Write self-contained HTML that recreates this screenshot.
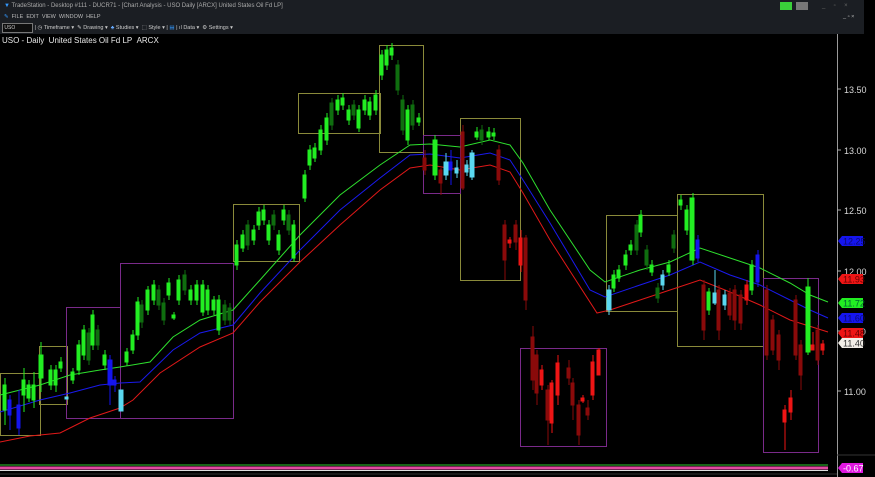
<!DOCTYPE html>
<html><head><meta charset="utf-8"><style>
html,body{margin:0;padding:0;background:#000;width:875px;height:477px;overflow:hidden;font-family:"Liberation Sans",sans-serif}
.t{position:absolute;left:0;width:864px;top:0;height:12px;background:#1b1e23;color:#aaa;font-size:6px;line-height:12px}
.m{position:absolute;left:0;width:864px;top:12px;height:10px;background:#1b1e23;color:#bbb;font-size:5.5px;line-height:10px}
.tb{position:absolute;left:0;width:864px;top:22px;height:12px;background:#1b1e23;color:#ccc;font-size:5.5px;line-height:12px}
</style></head><body>
<div class="t"><span style="color:#39f;margin-left:4px">▼</span> TradeStation - Desktop #111 - DUCR71 - [Chart Analysis - USO Daily [ARCX] United States Oil Fd LP]
<span style="position:absolute;left:780px;top:2px;width:12px;height:8px;background:#3ad03a"></span>
<span style="position:absolute;left:796px;top:2px;width:12px;height:8px;background:#777"></span>
<span style="position:absolute;left:822px;color:#666">_ &nbsp; &nbsp; ▫ &nbsp; &nbsp; ×</span></div>
<div class="m"><span style="color:#39f;margin-left:4px">✎</span>&nbsp; FILE &nbsp;EDIT &nbsp;VIEW &nbsp;WINDOW &nbsp;HELP<span style="position:absolute;left:843px">_ ▫ ×</span></div>
<div class="tb"><span style="display:inline-block;margin-left:2px;width:29px;height:8px;border:1px solid #777;background:#0d0d0d;line-height:8px;vertical-align:middle;font-size:5px">&nbsp;USO</span> | ◷ Timeframe ▾ &nbsp;✎ Drawing ▾ &nbsp;<span style="color:#6af">♣</span> Studies ▾ &nbsp;⬚ Style ▾ | <span style="color:#39f">▤</span> | ıl Data ▾ &nbsp;⚙ Settings ▾</div>
<div style="position:absolute;left:2px;top:36px;color:#e8e8e8;font-size:8px">USO - Daily &nbsp;United States Oil Fd LP &nbsp;ARCX</div>
<svg width="875" height="477" style="position:absolute;left:0;top:0" xmlns="http://www.w3.org/2000/svg">
<g fill="none" stroke-width="1">
<g stroke="#8a8a3a"><rect x="0.5" y="373.5" width="40" height="62"/><rect x="39.5" y="346.5" width="28" height="58"/><rect x="233.5" y="204.5" width="66" height="57"/><rect x="298.5" y="93.5" width="82" height="40"/><rect x="379.5" y="45.5" width="44" height="107"/><rect x="460.5" y="118.5" width="60" height="162"/><rect x="606.5" y="215.5" width="71" height="96"/><rect x="677.5" y="194.5" width="86" height="152"/></g>
<g stroke="#7a2a8a"><rect x="66.5" y="307.5" width="54" height="111"/><rect x="120.5" y="263.5" width="113" height="155"/><rect x="423.5" y="135.5" width="37" height="58"/><rect x="520.5" y="348.5" width="86" height="98"/><rect x="763.5" y="278.5" width="55" height="174"/></g>
<polyline stroke="#2ee02e" points="0,395 40,385 70,375 100,370 120,367 150,362 173,337 200,320 233,310 260,280 300,235 340,195 380,165 410,145 430,144 460,147 490,140 510,145 523,163 550,210 590,270 605,282 640,270 670,262 700,248 730,258 760,268 790,283 810,295 828,302"/>
<polyline stroke="#1a1aee" points="0,412 40,400 70,393 100,385 120,383 140,382 173,350 200,333 233,325 260,293 300,250 340,210 380,178 410,155 430,154 460,158 490,153 510,160 523,180 550,223 590,290 605,297 640,285 670,275 700,262 730,275 760,285 790,300 810,310 828,318"/>
<polyline stroke="#e01818" points="0,442 30,436 60,433 90,418 120,408 133,400 160,373 200,347 233,333 260,302 300,262 340,225 380,190 410,168 430,165 460,170 490,165 510,172 523,193 550,240 597,313 610,310 640,300 670,290 700,280 730,292 760,305 790,320 828,332"/>
</g>
<g id="c">
<g fill="#22ee22" stroke="#22ee22">
<path d="M5 378V425M24 368V412M29 380V402M34 372V408M41 342V392M51 365V390M56 365V392M61 357V372M73 368V384M79 340V375M84 325V360M93 310V350M105 350V370M127 348V366M133 330V354M138 297V340M148 286V315M154 280V305M169 278V300M174 312V320M179 275V305M191 285V305M197 280V305M203 280V316M208 285V315M214 296V315M219 295V335M237 240V270M243 230V252M254 225V245M259 207V230M264 205V225M269 220V245M279 230V255M284 205V225M294 220V262M305 170V202M310 145V170M315 143V162M321 125V155M327 113V145M338 95V115M343 93V110M349 105V125M359 105V132M365 95V115M370 97V120M376 90V115M382 50V80M387 45V70M392 43V60M408 105V145M419 113V126M435 135V180M477 127V140M489 127V140M494 128V140M614 270V292M619 265V282M626 250V270M631 240V255M641 210V237M652 260V276M669 260V276M681 195V210M687 205V235M693 193V265M709 288V315M752 260V295M808 278V355"/>
<rect x="3" y="385" width="3" height="25"/><rect x="22" y="380" width="3" height="15"/><rect x="27" y="385" width="3" height="13"/><rect x="32" y="385" width="3" height="15"/><rect x="39" y="355" width="4" height="23"/><rect x="49" y="370" width="3" height="15"/><rect x="54" y="370" width="3" height="15"/><rect x="59" y="362" width="3" height="6"/><rect x="71" y="372" width="3" height="8"/><rect x="77" y="345" width="3" height="25"/><rect x="82" y="330" width="3" height="25"/><rect x="91" y="315" width="3" height="30"/><rect x="103" y="355" width="3" height="10"/><rect x="125" y="352" width="3" height="10"/><rect x="131" y="335" width="3" height="15"/><rect x="136" y="302" width="3" height="33"/><rect x="146" y="290" width="3" height="20"/><rect x="152" y="285" width="3" height="15"/><rect x="167" y="283" width="3" height="12"/><rect x="172" y="315" width="3" height="3"/><rect x="177" y="280" width="3" height="20"/><rect x="189" y="290" width="3" height="10"/><rect x="195" y="285" width="3" height="15"/><rect x="201" y="285" width="3" height="27"/><rect x="206" y="290" width="3" height="20"/><rect x="212" y="300" width="3" height="10"/><rect x="217" y="300" width="3" height="30"/><rect x="235" y="245" width="3" height="20"/><rect x="241" y="235" width="3" height="13"/><rect x="252" y="230" width="3" height="10"/><rect x="257" y="212" width="3" height="13"/><rect x="262" y="210" width="3" height="10"/><rect x="267" y="225" width="3" height="15"/><rect x="277" y="235" width="3" height="15"/><rect x="282" y="210" width="3" height="10"/><rect x="292" y="225" width="3" height="33"/><rect x="303" y="175" width="3" height="23"/><rect x="308" y="150" width="3" height="15"/><rect x="313" y="148" width="3" height="10"/><rect x="319" y="130" width="3" height="20"/><rect x="325" y="118" width="3" height="22"/><rect x="336" y="100" width="3" height="10"/><rect x="341" y="98" width="3" height="7"/><rect x="347" y="110" width="3" height="10"/><rect x="357" y="110" width="3" height="18"/><rect x="363" y="100" width="3" height="10"/><rect x="368" y="102" width="3" height="13"/><rect x="374" y="95" width="3" height="15"/><rect x="380" y="55" width="3" height="20"/><rect x="385" y="50" width="3" height="15"/><rect x="390" y="48" width="3" height="7"/><rect x="406" y="110" width="3" height="30"/><rect x="417" y="118" width="3" height="4"/><rect x="433" y="140" width="4" height="35"/><rect x="475" y="132" width="3" height="5"/><rect x="487" y="132" width="3" height="5"/><rect x="492" y="133" width="3" height="3"/><rect x="612" y="275" width="3" height="13"/><rect x="617" y="270" width="3" height="8"/><rect x="624" y="255" width="3" height="10"/><rect x="629" y="245" width="3" height="5"/><rect x="639" y="215" width="3" height="17"/><rect x="650" y="265" width="3" height="7"/><rect x="667" y="265" width="3" height="7"/><rect x="679" y="200" width="3" height="5"/><rect x="685" y="210" width="3" height="20"/><rect x="690" y="198" width="4" height="62"/><rect x="707" y="292" width="3" height="18"/><rect x="750" y="265" width="3" height="25"/><rect x="806" y="287" width="4" height="65"/>
</g>
<g fill="#0f6e0f" stroke="#0f6e0f">
<path d="M89 328V365M98 325V350M142 300V328M159 285V310M164 298V325M185 270V295M225 300V325M230 303V325M248 220V250M274 210V230M289 210V235M332 98V130M354 100V120M398 60V95M403 95V135M413 100V130M482 125V145M637 220V255M647 245V270M658 283V303M674 230V253"/>
<rect x="87" y="333" width="3" height="27"/><rect x="96" y="330" width="3" height="15"/><rect x="140" y="305" width="3" height="17"/><rect x="157" y="290" width="3" height="15"/><rect x="162" y="303" width="3" height="17"/><rect x="183" y="275" width="3" height="15"/><rect x="223" y="305" width="3" height="15"/><rect x="228" y="308" width="3" height="12"/><rect x="246" y="225" width="3" height="20"/><rect x="272" y="215" width="3" height="10"/><rect x="287" y="215" width="3" height="15"/><rect x="330" y="103" width="3" height="22"/><rect x="352" y="105" width="3" height="10"/><rect x="396" y="65" width="3" height="25"/><rect x="401" y="100" width="3" height="30"/><rect x="411" y="105" width="3" height="20"/><rect x="480" y="130" width="3" height="10"/><rect x="635" y="225" width="3" height="25"/><rect x="645" y="250" width="3" height="15"/><rect x="656" y="288" width="3" height="10"/><rect x="672" y="235" width="3" height="13"/>
</g>
<g fill="#1515ee" stroke="#1515ee">
<path d="M10 395V430M19 390V435M110 355V405M115 376V392M451 150V185M698 235V262M758 250V287"/>
<rect x="8" y="400" width="3" height="15"/><rect x="17" y="405" width="3" height="23"/><rect x="108" y="360" width="4" height="25"/><rect x="113" y="380" width="3" height="5"/><rect x="449" y="162" width="3" height="8"/><rect x="696" y="240" width="3" height="18"/><rect x="756" y="255" width="3" height="27"/>
</g>
<g fill="#5ad8f0" stroke="#5ad8f0">
<path d="M446 153V180M457 160V178M467 160V176M472 150V180M609 285V315M663 270V290M715 270V305M725 290V310"/>
<rect x="65" y="397" width="3" height="2"/><rect x="119" y="390" width="4" height="21"/><rect x="444" y="162" width="4" height="13"/><rect x="455" y="168" width="3" height="5"/><rect x="465" y="165" width="3" height="7"/><rect x="470" y="153" width="4" height="24"/><rect x="607" y="290" width="4" height="20"/><rect x="661" y="275" width="3" height="10"/><rect x="713" y="293" width="3" height="10"/><rect x="723" y="295" width="3" height="10"/>
</g>
<g fill="#8a0a0a" stroke="#8a0a0a">
<path d="M425 150V175M441 168V195M463 125V190M499 145V185M505 220V280M516 220V250M526 235V310M533 326V390M537 350V405M548 385V445M569 360V385M573 378V420M579 400V445M588 400V420M704 280V340M719 285V340M730 288V320M735 285V330M741 290V330M767 285V360M773 315V355M779 330V370M796 295V360M801 340V390M818 325V365"/>
<rect x="423" y="158" width="3" height="12"/><rect x="439" y="170" width="3" height="13"/><rect x="461" y="132" width="3" height="56"/><rect x="497" y="150" width="3" height="30"/><rect x="503" y="225" width="3" height="35"/><rect x="514" y="225" width="3" height="17"/><rect x="524" y="238" width="3" height="62"/><rect x="531" y="337" width="3" height="43"/><rect x="535" y="355" width="3" height="38"/><rect x="546" y="390" width="3" height="30"/><rect x="567" y="368" width="3" height="10"/><rect x="571" y="383" width="3" height="22"/><rect x="577" y="405" width="3" height="30"/><rect x="586" y="408" width="3" height="7"/><rect x="702" y="285" width="3" height="45"/><rect x="717" y="290" width="3" height="40"/><rect x="728" y="293" width="3" height="22"/><rect x="733" y="290" width="3" height="30"/><rect x="739" y="295" width="3" height="28"/><rect x="765" y="290" width="3" height="65"/><rect x="771" y="320" width="3" height="30"/><rect x="777" y="335" width="3" height="25"/><rect x="794" y="300" width="3" height="55"/><rect x="799" y="345" width="3" height="30"/><rect x="816" y="330" width="3" height="30"/>
</g>
<g fill="#ee1515" stroke="#ee1515">
<path d="M510 237V248M521 230V272M542 365V390M552 380V433M558 355V405M583 395V403M593 355V400M599 348V375M747 280V305M785 405V450M791 390V420M813 332V350M823 340V355"/>
<rect x="508" y="240" width="3" height="3"/><rect x="519" y="238" width="3" height="27"/><rect x="540" y="370" width="3" height="15"/><rect x="550" y="383" width="3" height="40"/><rect x="556" y="363" width="3" height="32"/><rect x="581" y="398" width="3" height="3"/><rect x="591" y="362" width="3" height="33"/><rect x="597" y="350" width="3" height="25"/><rect x="745" y="285" width="3" height="15"/><rect x="783" y="410" width="3" height="12"/><rect x="789" y="398" width="3" height="14"/><rect x="811" y="345" width="3" height="5"/><rect x="821" y="344" width="3" height="6"/>
</g>
</g>
<rect x="0" y="455" width="837" height="22" fill="#000"/>
<line x1="0" y1="465" x2="828" y2="465" stroke="#2ec82e"/>
<rect x="0" y="466.5" width="828" height="3" fill="#e04aa0"/>
<line x1="0" y1="470.5" x2="828" y2="470.5" stroke="#ddd"/>
<line x1="0" y1="474" x2="837" y2="474" stroke="#333"/>
<line x1="837.5" y1="34" x2="837.5" y2="477" stroke="#9a9a9a"/>
<line x1="837" y1="455" x2="875" y2="455" stroke="#333"/>
<g font-family="Liberation Sans,sans-serif" font-size="9" fill="#d8d8d8">
<text x="844" y="93">13.50</text><text x="844" y="154">13.00</text><text x="844" y="214">12.50</text><text x="844" y="275">12.00</text><text x="844" y="335">11.50</text><text x="844" y="395">11.00</text>
<path d="M837 89h4M837 150h4M837 210h4M837 271h4M837 331h4M837 391h4" stroke="#aaa"/>
</g>
<g font-family="Liberation Sans,sans-serif" font-size="9">
<path d="M838 241l4-5h21v10h-21z" fill="#1515ee"/><text x="843" y="244.5" fill="#0a0a70">12.25</text>
<path d="M838 279l4-5h21v10h-21z" fill="#ee1515"/><text x="843" y="282.5" fill="#600">11.93</text>
<path d="M838 303l4-5h21v10h-21z" fill="#22ee22"/><text x="843" y="306.5" fill="#063">11.72</text>
<path d="M838 318l4-5h21v10h-21z" fill="#1515ee"/><text x="843" y="321.5" fill="#0a0a70">11.60</text>
<path d="M838 333l4-5h21v10h-21z" fill="#ee1515"/><text x="843" y="336.5" fill="#600">11.48</text>
<path d="M838 343l4-5h21v10h-21z" fill="#f2eee8"/><text x="843" y="346.5" fill="#333">11.40</text>
<path d="M838 468l4-5h21v10h-21z" fill="#e018e0"/><text x="843" y="471.5" fill="#fff">-0.67</text>
</g>
</svg>
</body></html>
